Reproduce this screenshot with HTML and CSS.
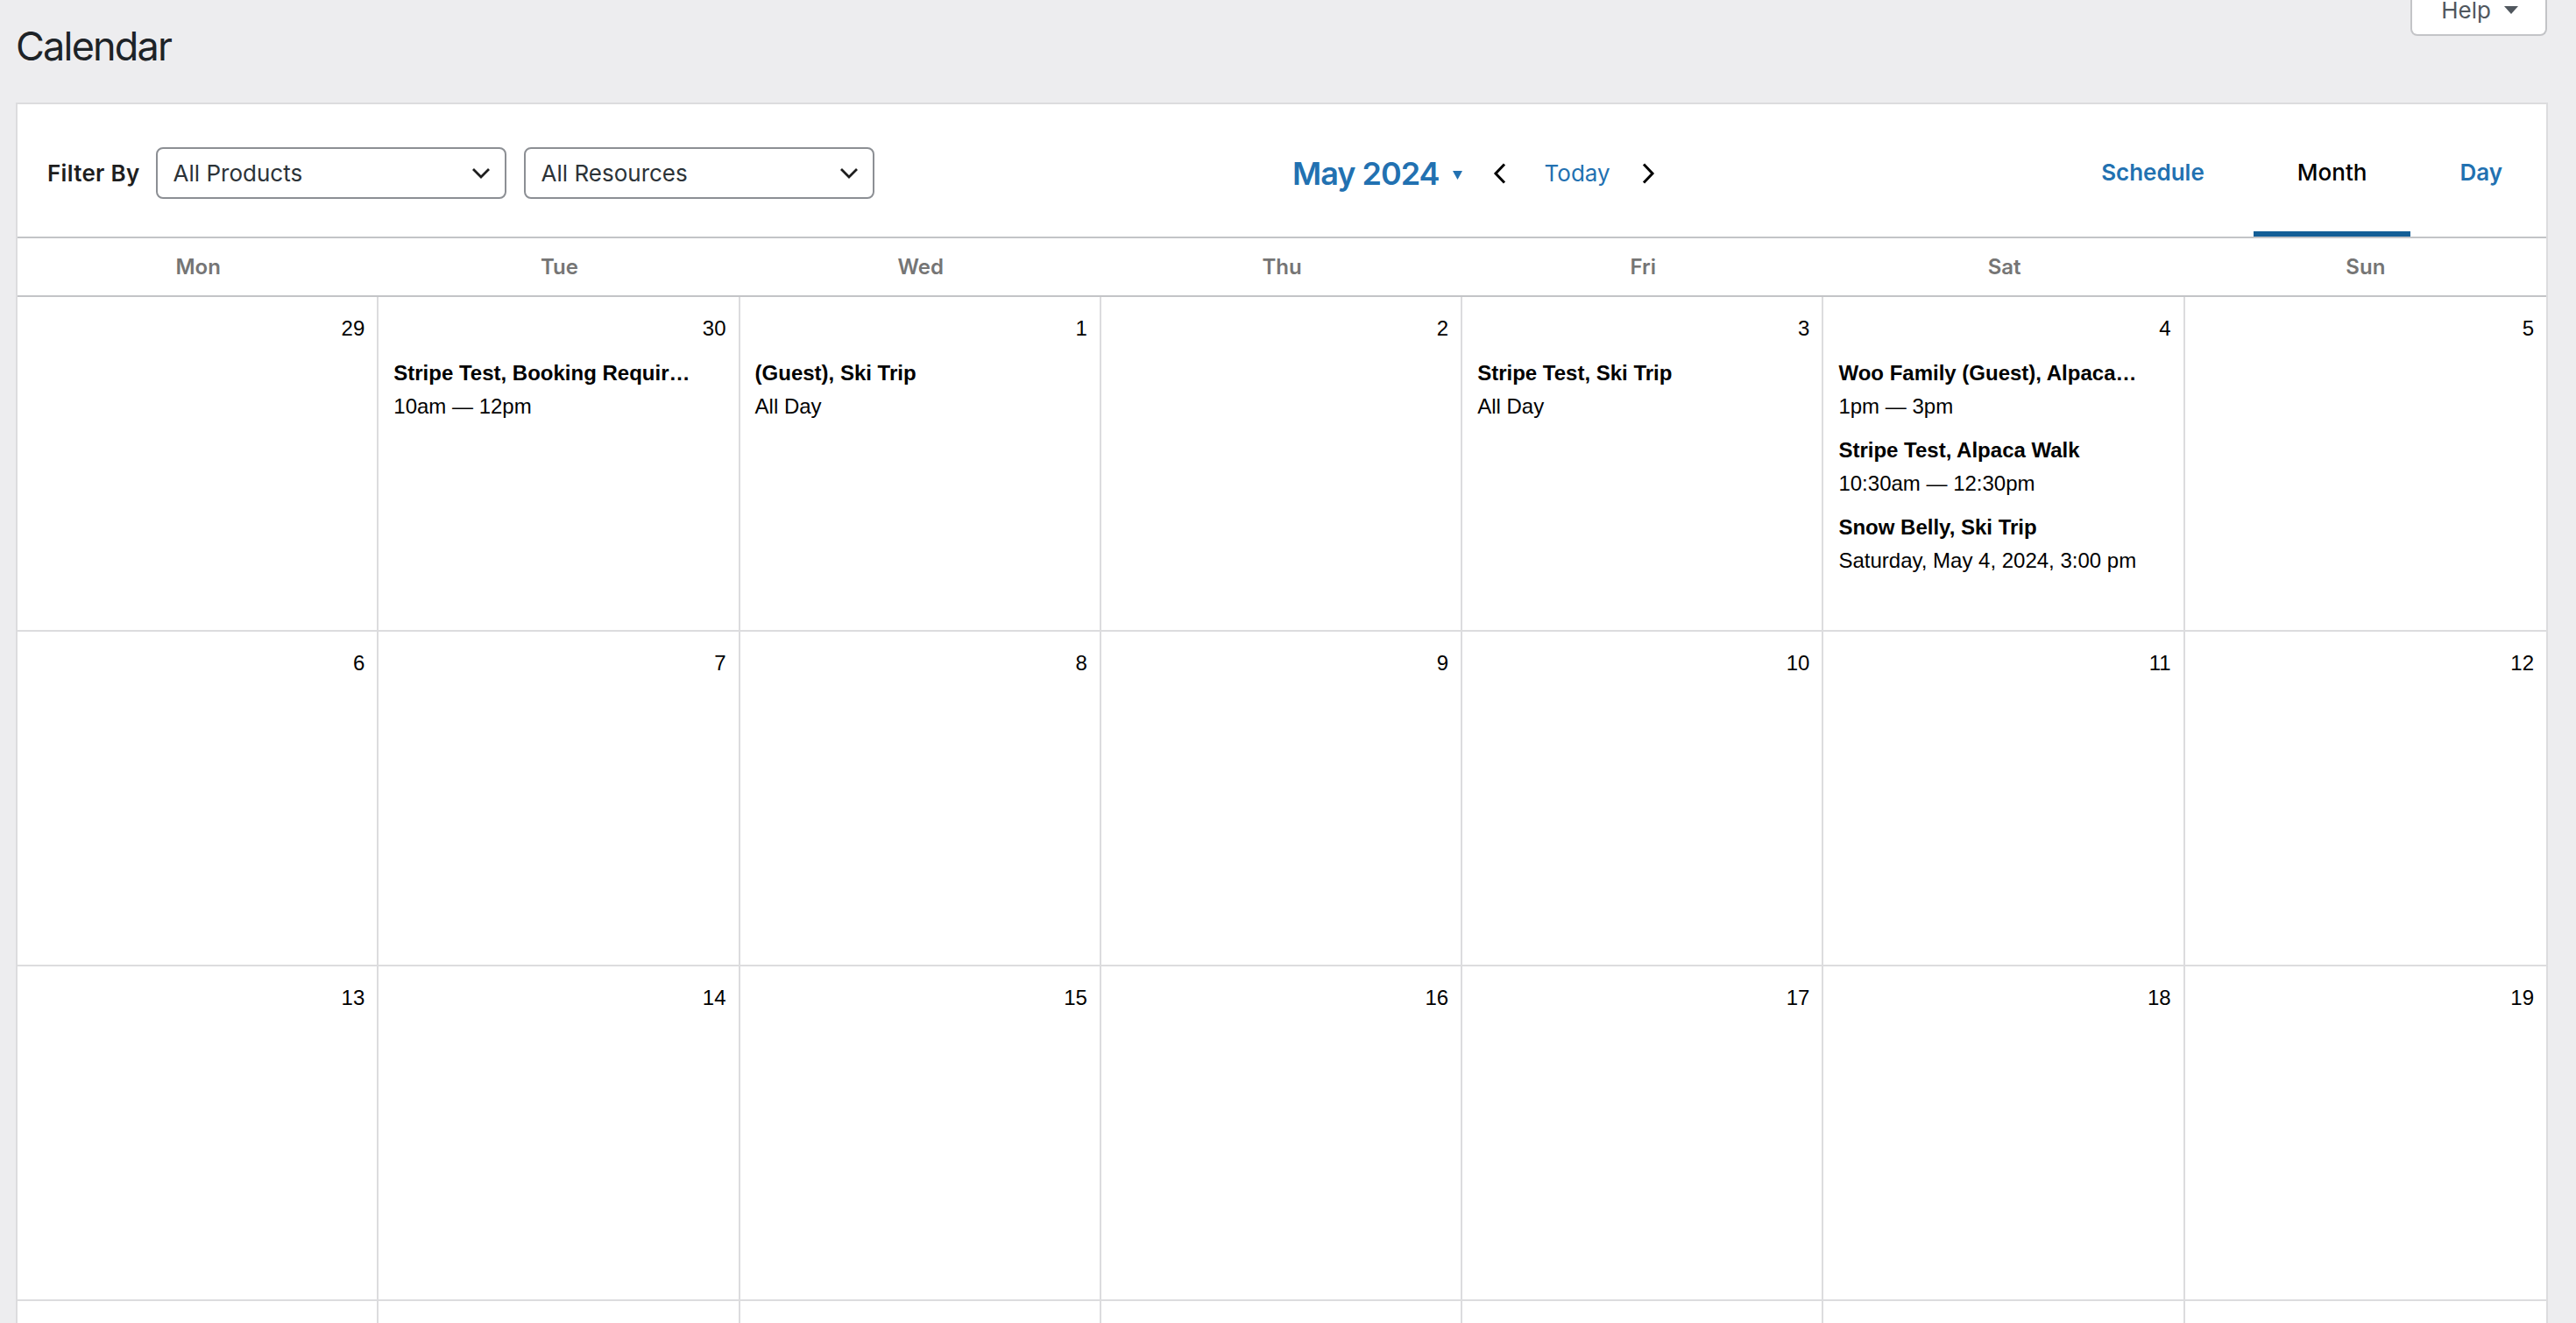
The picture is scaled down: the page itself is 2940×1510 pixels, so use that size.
FILE: index.html
```html
<!DOCTYPE html>
<html>
<head>
  <meta charset="UTF-8">
  <title>Calendar</title>
  <link rel="stylesheet" href="styles.css">
</head>
<body>
<div class="topbar">
  <h1 class="page-title">Calendar</h1>
  <button class="help-tab">Help
    <svg width="16" height="9" viewBox="0 0 16 9"><polygon points="0,0 16,0 8,9" fill="#50575e"/></svg>
  </button>
</div>

<div class="calendar">
  <div class="toolbar">
    <div class="filters">
      <span class="filter-label">Filter By</span>
      <div class="select">
        <span class="select-text">All Products</span>
        <svg width="22" height="13" viewBox="0 0 22 13"><path d="M2 2 L11 11 L20 2" fill="none" stroke="#1e1e1e" stroke-width="2.8"/></svg>
      </div>
      <div class="select">
        <span class="select-text">All Resources</span>
        <svg width="22" height="13" viewBox="0 0 22 13"><path d="M2 2 L11 11 L20 2" fill="none" stroke="#1e1e1e" stroke-width="2.8"/></svg>
      </div>
    </div>

    <div class="month-nav">
      <span class="month-label">May 2024
        <svg class="caret" width="11" height="10" viewBox="0 0 11 10"><polygon points="0,0 11,0 5.5,10" fill="#2271b1"/></svg>
      </span>
      <button class="nav-arrow prev">
        <svg width="16" height="24" viewBox="0 0 16 24"><path d="M13 1.5 L3 12 L13 22.5" fill="none" stroke="#000" stroke-width="3"/></svg>
      </button>
      <a class="today" href="#">Today</a>
      <button class="nav-arrow next">
        <svg width="16" height="24" viewBox="0 0 16 24"><path d="M3 1.5 L13 12 L3 22.5" fill="none" stroke="#000" stroke-width="3"/></svg>
      </button>
    </div>

    <nav class="view-tabs">
      <a class="tab" href="#">Schedule</a>
      <a class="tab active" href="#">Month</a>
      <a class="tab" href="#">Day</a>
    </nav>
  </div>

  <div class="weekdays">
    <div class="weekday">Mon</div>
    <div class="weekday">Tue</div>
    <div class="weekday">Wed</div>
    <div class="weekday">Thu</div>
    <div class="weekday">Fri</div>
    <div class="weekday">Sat</div>
    <div class="weekday">Sun</div>
  </div>

  <div class="month-grid">
    <div class="day"><div class="date">29</div></div>
    <div class="day"><div class="date">30</div>
      <div class="events">
        <div class="event"><div class="event-title">Stripe Test, Booking Requir…</div><div class="event-time">10am — 12pm</div></div>
      </div>
    </div>
    <div class="day"><div class="date">1</div>
      <div class="events">
        <div class="event"><div class="event-title">(Guest), Ski Trip</div><div class="event-time">All Day</div></div>
      </div>
    </div>
    <div class="day"><div class="date">2</div></div>
    <div class="day"><div class="date">3</div>
      <div class="events">
        <div class="event"><div class="event-title">Stripe Test, Ski Trip</div><div class="event-time">All Day</div></div>
      </div>
    </div>
    <div class="day"><div class="date">4</div>
      <div class="events">
        <div class="event"><div class="event-title">Woo Family (Guest), Alpaca…</div><div class="event-time">1pm — 3pm</div></div>
        <div class="event"><div class="event-title">Stripe Test, Alpaca Walk</div><div class="event-time">10:30am — 12:30pm</div></div>
        <div class="event"><div class="event-title">Snow Belly, Ski Trip</div><div class="event-time">Saturday, May 4, 2024, 3:00 pm</div></div>
      </div>
    </div>
    <div class="day"><div class="date">5</div></div>

    <div class="day"><div class="date">6</div></div>
    <div class="day"><div class="date">7</div></div>
    <div class="day"><div class="date">8</div></div>
    <div class="day"><div class="date">9</div></div>
    <div class="day"><div class="date">10</div></div>
    <div class="day"><div class="date">11</div></div>
    <div class="day"><div class="date">12</div></div>

    <div class="day"><div class="date">13</div></div>
    <div class="day"><div class="date">14</div></div>
    <div class="day"><div class="date">15</div></div>
    <div class="day"><div class="date">16</div></div>
    <div class="day"><div class="date">17</div></div>
    <div class="day"><div class="date">18</div></div>
    <div class="day"><div class="date">19</div></div>

    <div class="day"><div class="date">20</div></div>
    <div class="day"><div class="date">21</div></div>
    <div class="day"><div class="date">22</div></div>
    <div class="day"><div class="date">23</div></div>
    <div class="day"><div class="date">24</div></div>
    <div class="day"><div class="date">25</div></div>
    <div class="day"><div class="date">26</div></div>
  </div>
</div>
</body>
</html>
```

FILE: styles.css
```css
body {
  margin: 0;
  background: #ededef;
  color: #1d2327;
  font-family: Inter, "Noto Sans", sans-serif;
}

a {
  text-decoration: none;
}

button {
  font-family: inherit;
  background: none;
  border: none;
  padding: 0;
  cursor: pointer;
}

/* page header */
.topbar {
  display: flex;
  justify-content: space-between;
  align-items: flex-start;
}

.page-title {
  margin: 23px 0 34px 18px;
  font-size: 45px;
  font-weight: 400;
  line-height: 60px;
  letter-spacing: -1.8px;
}

.help-tab {
  display: flex;
  align-items: flex-start;
  gap: 15px;
  box-sizing: border-box;
  height: 41px;
  margin-right: 33px;
  padding: 0 31px 0 33px;
  border: 2px solid #c3c4c7;
  border-top: none;
  border-radius: 0 0 8px 8px;
  background: #fff;
  color: #50575e;
  font-size: 26px;
  line-height: 24px;
}

.help-tab svg {
  margin-top: 7px;
}

/* calendar card */
.calendar {
  margin: 0 32px 0 18px;
  background: #fff;
  border: 2px solid #dcdcde;
}

.toolbar {
  display: flex;
  justify-content: space-between;
  align-items: center;
  box-sizing: border-box;
  height: 153px;
  padding: 6px 0 0 34px;
  border-bottom: 2px solid #c3c4c7;
}

.filters {
  display: flex;
  align-items: center;
}

.filter-label {
  margin-right: 18px;
  font-size: 26px;
  font-weight: 600;
  letter-spacing: 0.3px;
  color: #1e1e1e;
}

.select {
  display: flex;
  justify-content: space-between;
  align-items: center;
  box-sizing: border-box;
  width: 400px;
  height: 59px;
  margin-right: 20px;
  padding: 0 16px 0 18px;
  border: 2px solid #8c8f94;
  border-radius: 8px;
  color: #2c3338;
  font-size: 26px;
}

.select:last-child {
  margin-right: 0;
}

.month-nav {
  display: flex;
  align-items: center;
  margin-left: 18px;
}

.month-label {
  display: flex;
  align-items: center;
  color: #2271b1;
  font-size: 36px;
  font-weight: 600;
  letter-spacing: -1px;
}

.caret {
  margin: 4px 0 0 15px;
}

.nav-arrow {
  display: flex;
  margin-left: 35px;
}

.today {
  margin-left: 43px;
  color: #2271b1;
  font-size: 26px;
}

.view-tabs {
  display: flex;
  align-self: stretch;
  gap: 6px;
}

.tab {
  display: flex;
  align-items: center;
  padding: 3px 50px 0;
  border-bottom: 6px solid transparent;
  color: #2271b1;
  font-size: 26px;
  font-weight: 600;
}

.tab.active {
  border-bottom-color: #135e96;
  color: #000;
  font-weight: 500;
}

/* month grid */
.weekdays {
  display: grid;
  grid-template-columns: repeat(7, minmax(0, 1fr));
  box-sizing: border-box;
  height: 67px;
  border-bottom: 2px solid #c3c4c7;
}

.weekday {
  display: flex;
  align-items: center;
  justify-content: center;
  color: #757575;
  font-size: 24px;
  font-weight: 600;
}

.month-grid {
  display: grid;
  grid-template-columns: repeat(7, minmax(0, 1fr));
  grid-auto-rows: 382px;
}

.day {
  box-sizing: border-box;
  padding: 18px 14px 0 17px;
  border-right: 2px solid #dcdcde;
  border-bottom: 2px solid #dcdcde;
  overflow: hidden;
  color: #000;
  font-family: "Liberation Sans", Arial, sans-serif;
  font-size: 24px;
}

.day:nth-child(7n) {
  border-right: none;
}

.date {
  line-height: 36px;
  text-align: right;
}

.events {
  margin-top: 14px;
}

.event + .event {
  margin-top: 12px;
}

.event-title,
.event-time {
  line-height: 38px;
  white-space: nowrap;
}

.event-title {
  font-weight: 700;
}
```
